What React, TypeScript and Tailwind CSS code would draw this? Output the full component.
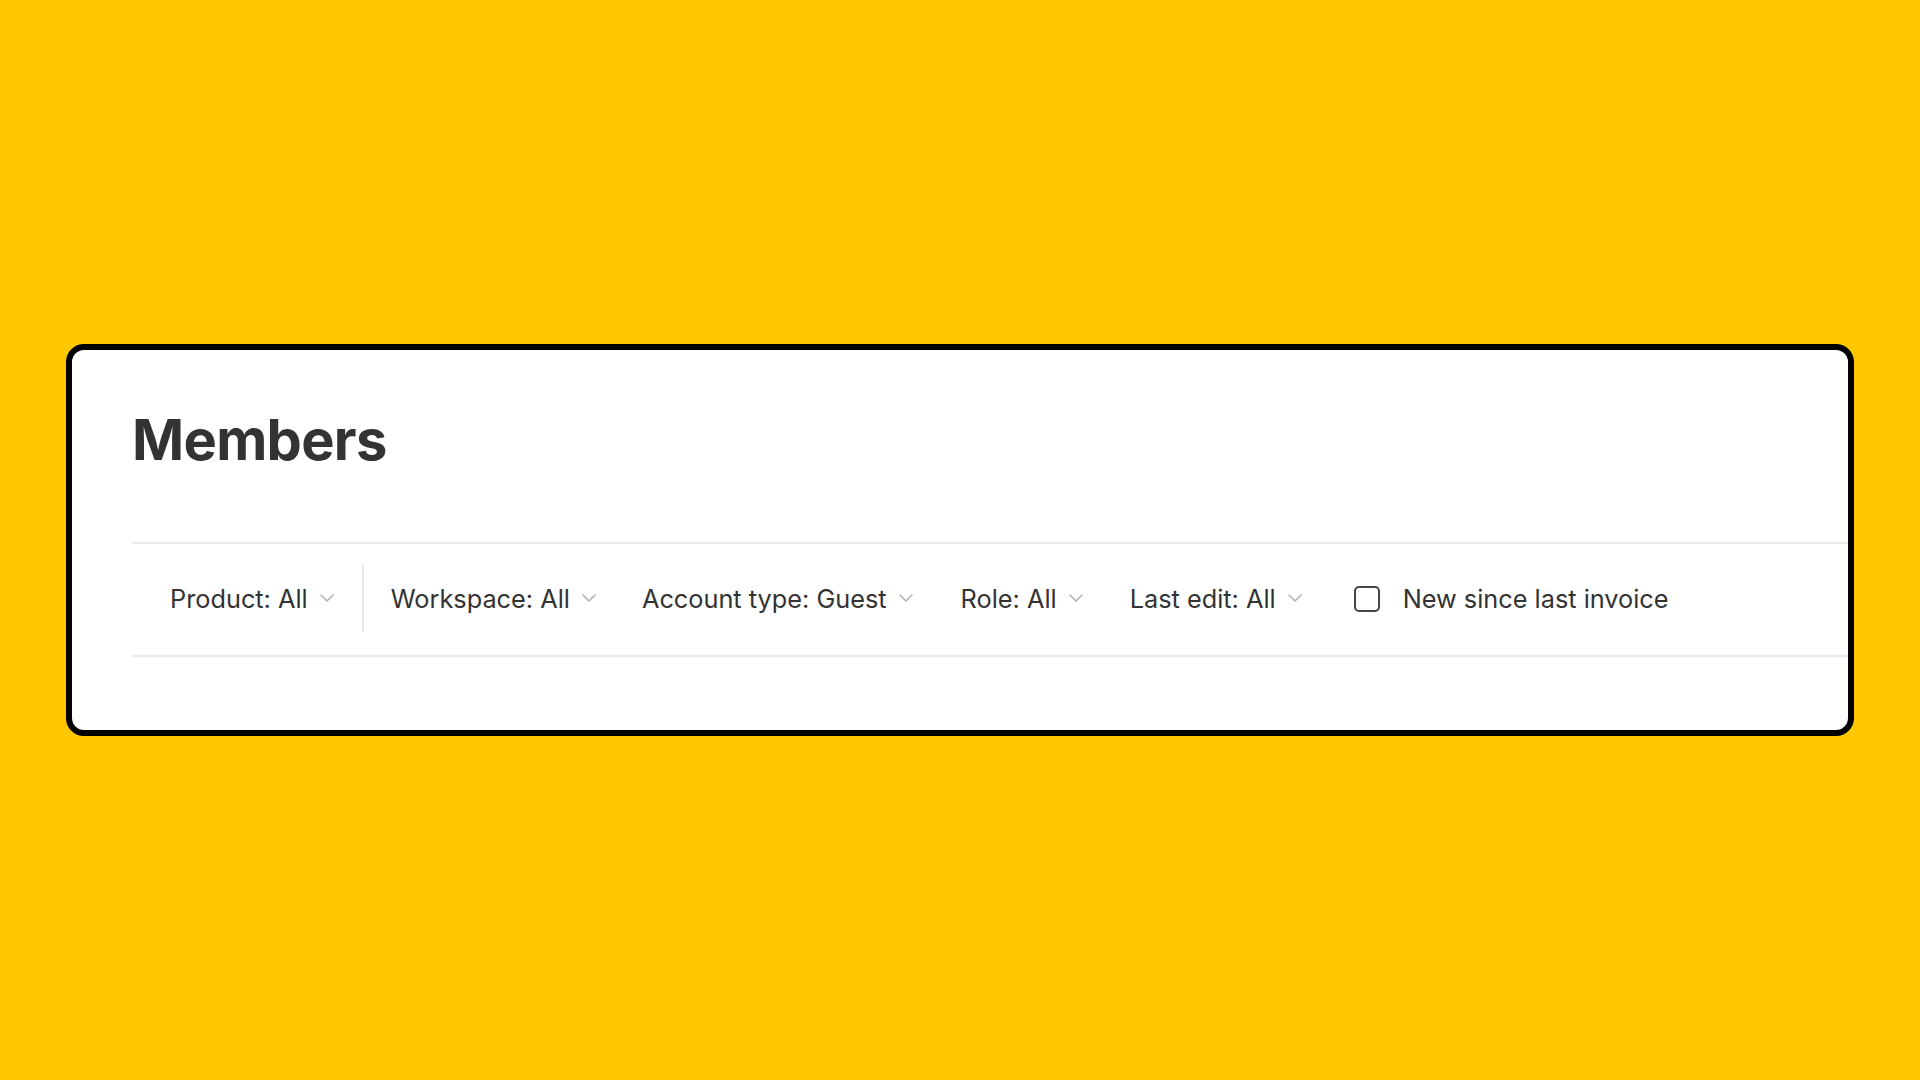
import React from "react";

function Chevron() {
  return (
    <svg width="14" height="8" viewBox="0 0 14 8" fill="none" className="shrink-0">
      <path d="M1 1L7 7L13 1" stroke="#b3b3b3" strokeWidth="1.6" strokeLinecap="round" strokeLinejoin="round" />
    </svg>
  );
}

function Filter({ label, className = "" }: { label: string; className?: string }) {
  return (
    <button className={`flex items-center gap-[12px] bg-transparent p-0 text-[25.3px] text-[#333333] leading-none ${className}`}>
      <span>{label}</span>
      <Chevron />
    </button>
  );
}

export default function App() {
  return (
    <div
      className="min-h-screen w-full bg-[#ffc700] flex items-center justify-center"
      style={{ fontFamily: "Inter, 'Noto Sans', sans-serif" }}
    >
      <div className="w-[1788px] h-[392px] bg-white border-[6px] border-black rounded-[18px] pl-[60px] pt-[62px] flex flex-col">
        <h1 className="text-[56px] leading-[56px] font-bold text-[#333333] tracking-[-0.7px]">Members</h1>
        <div className="mt-[74px] h-[115px] border-y-2 border-[#e9e9e9] flex items-center pb-[2px]">
          <div className="pl-[38px] pr-[28px]">
            <Filter label="Product: All" />
          </div>
          <div className="w-[2px] h-[67px] bg-[#e9e9e9]" />
          <div className="pl-[27px] flex items-center">
            <Filter label="Workspace: All" />
            <Filter label="Account type: Guest" className="ml-[46px]" />
            <Filter label="Role: All" className="ml-[48px]" />
            <Filter label="Last edit: All" className="ml-[47px]" />
            <label className="ml-[52px] flex items-center gap-[23px] text-[25.3px] text-[#333333] leading-none">
              <span className="w-[26px] h-[26px] rounded-[5px] border-2 border-[#444444] bg-white" />
              <span>New since last invoice</span>
            </label>
          </div>
        </div>
      </div>
    </div>
  );
}
